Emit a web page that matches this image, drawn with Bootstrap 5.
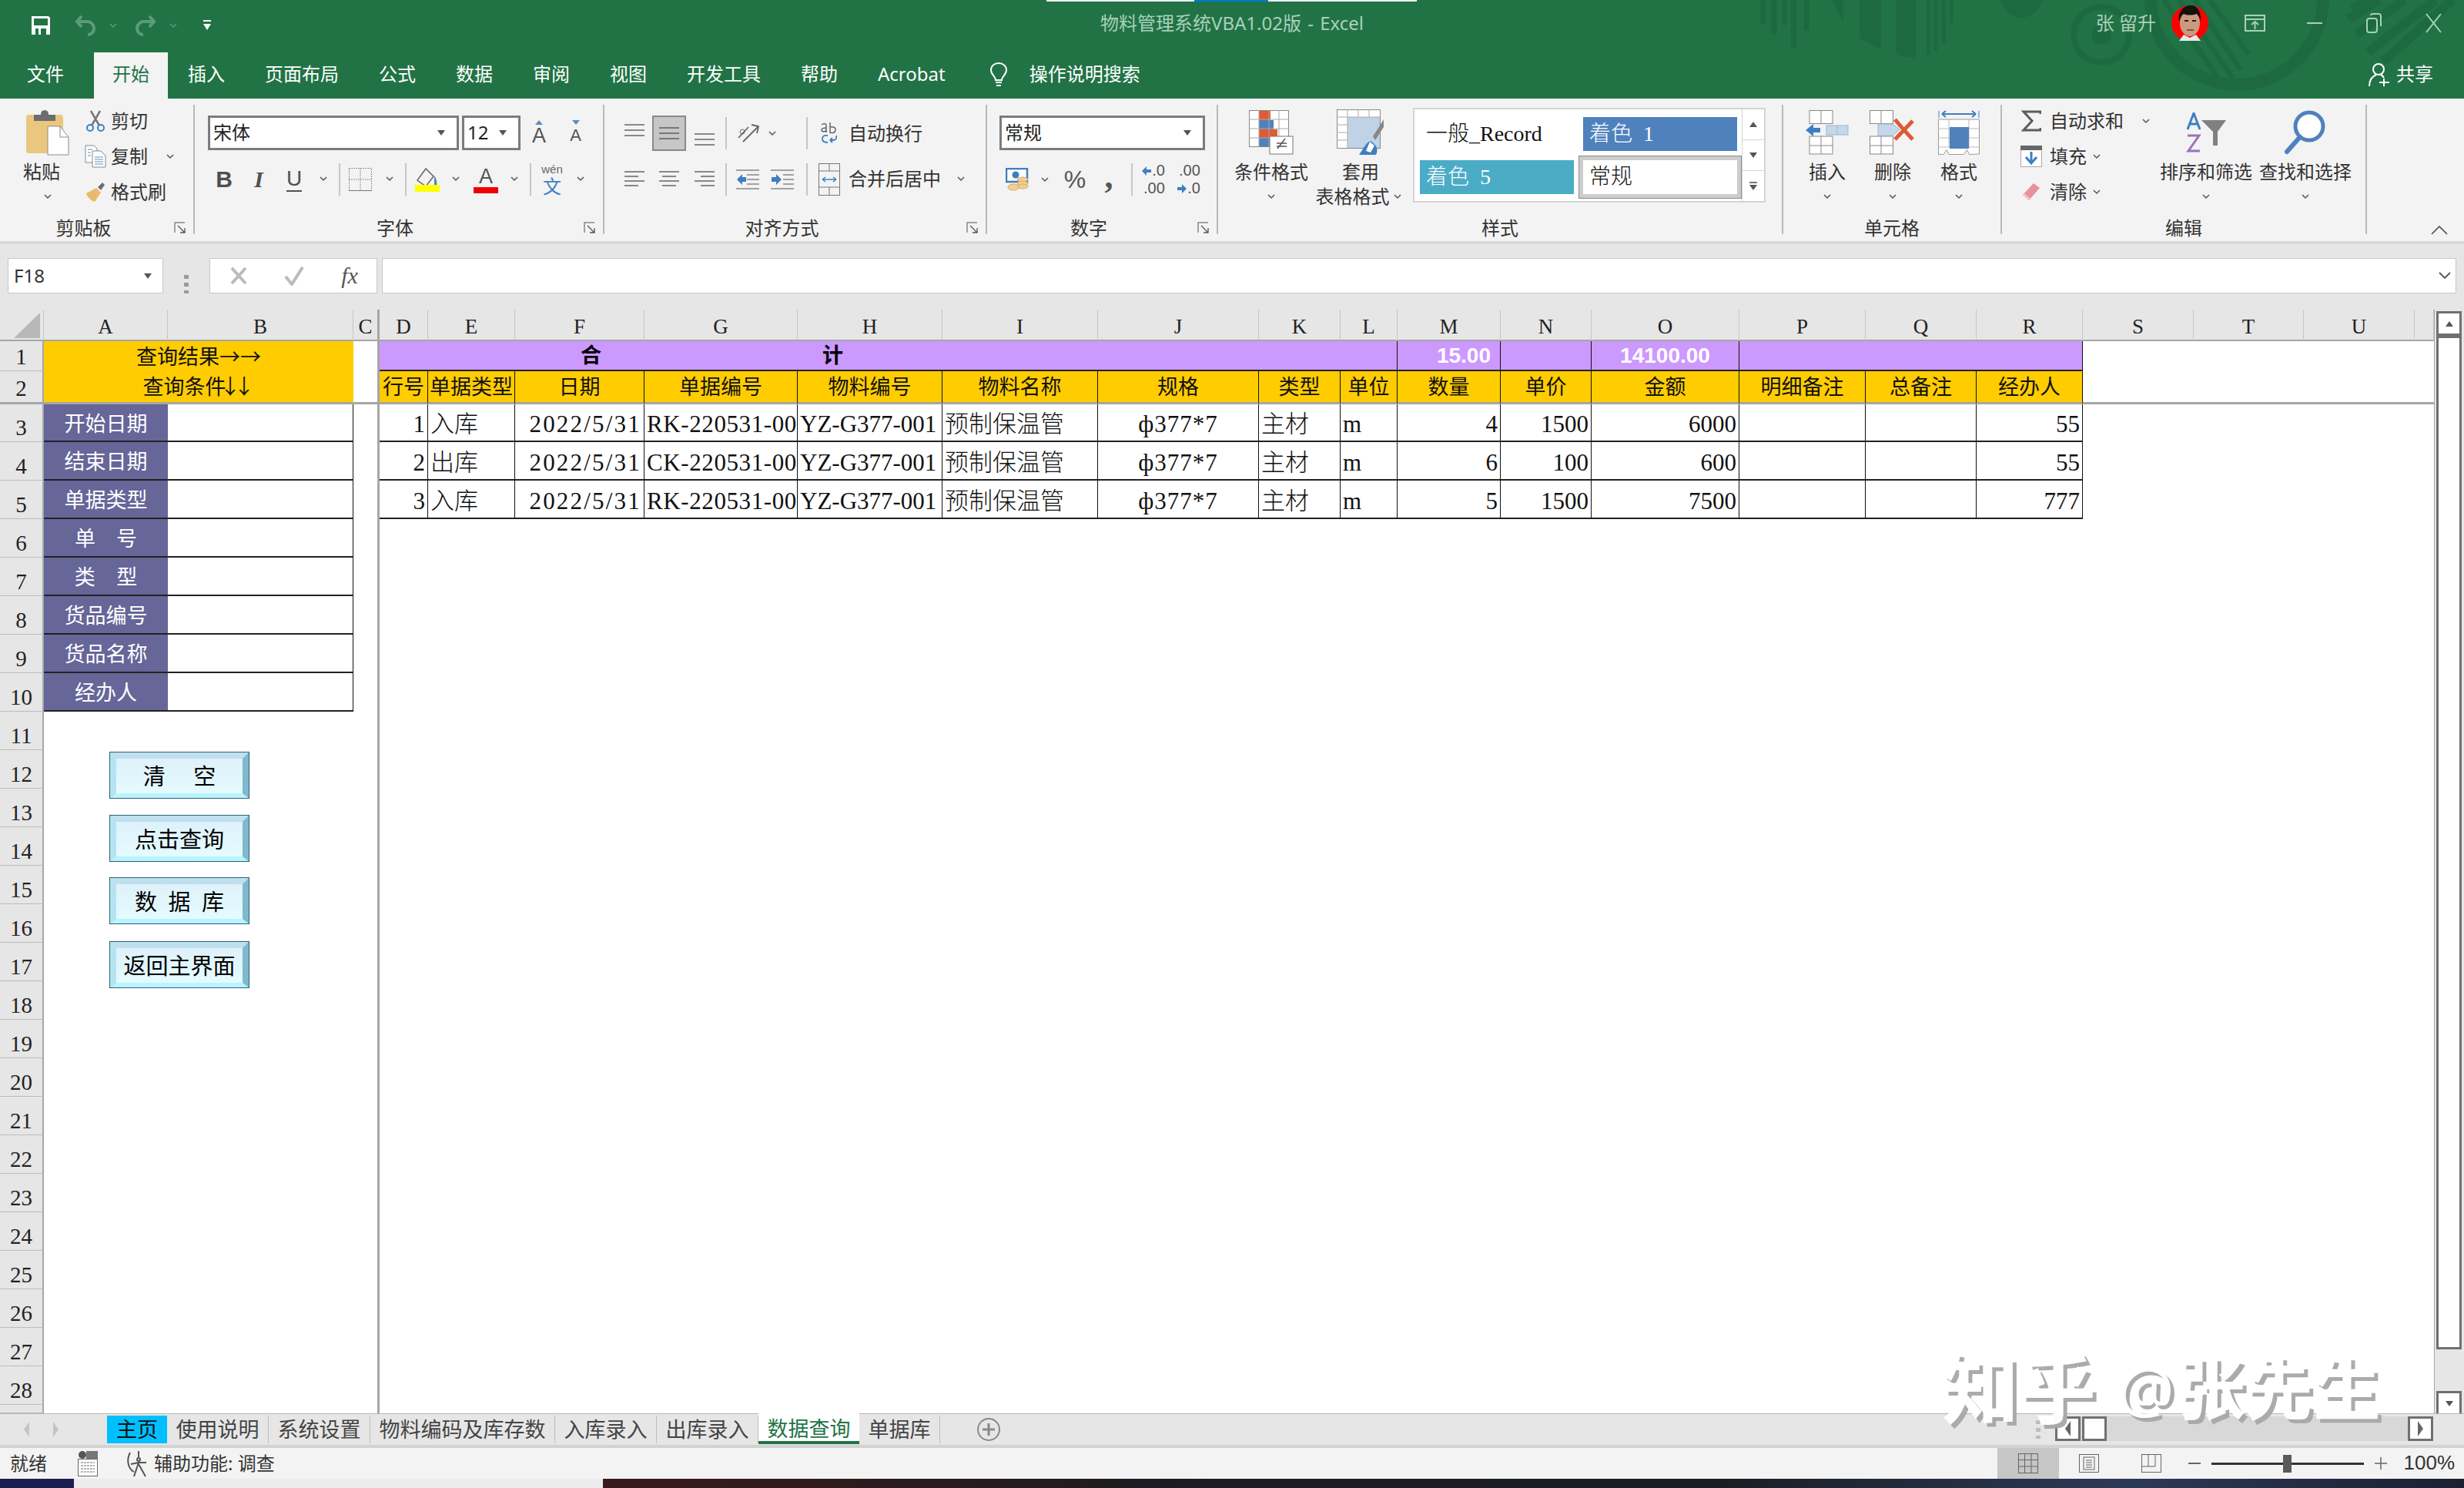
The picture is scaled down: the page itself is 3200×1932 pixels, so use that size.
<!DOCTYPE html>
<html lang="zh-CN">
<head>
<meta charset="utf-8">
<title>物料管理系统VBA1.02版 - Excel</title>
<link rel="stylesheet" href="https://cdn.jsdelivr.net/npm/bootstrap@5.3.0/dist/css/bootstrap.min.css">
<style>
html,body{margin:0;width:3200px;height:1932px;overflow:hidden;background:#f3f3f3}
body{font-family:"Noto Sans","Noto Sans CJK SC",sans-serif;font-size:24px;line-height:1.2;color:#333}
svg{display:block;flex:none}
.xtop{background:#217346;height:128px;overflow:hidden}
.xdeco{left:0;top:0;pointer-events:none}
.xtrow{height:60px;margin-bottom:8px}
.xside{flex:1 1 0}
.xqat{display:grid;grid-template-columns:66px 59px 27px 51px 27px 44px;justify-items:end;align-items:center;padding-top:6px}
.xtitle{color:#a8d0b9;white-space:nowrap;word-spacing:2px}
.xwin{display:grid;grid-template-columns:auto 68px 74px 74px 77px 78px;justify-items:end;align-items:center;padding-right:29px;color:#a8d0b9;position:relative}
.xtabs{height:60px;color:#fff}
.xtb{display:flex;align-items:center;padding:0 26px 3px;white-space:nowrap}
.xtb0{margin-left:9px}
.xtb1{margin-left:13px;padding:0 24px 3px;background:#f3f3f3;color:#217346}
.xtip{margin-left:31px;gap:28px;padding-bottom:3px}
.xshare{margin-left:auto;padding-right:40px;gap:8px}
.xrib{height:185px;background:#f3f3f3;border-bottom:0;padding-top:8px}
.rg{height:168px;border-right:2px solid #b9b9b9;display:flex;flex-direction:column;flex:none}
.rbd{height:152px;display:flex;flex:none}
.rft{height:16px;line-height:16px;display:flex;align-items:center;white-space:nowrap}
.rlb{flex:1 1 0;text-align:center;line-height:16px}
.rlc{width:34px;display:flex;justify-content:center}
.pl24{padding-left:24px}
.w0{width:253px}.w1{width:532px}.w2{width:497px}.w3{width:300px}.w4{width:734px}.w5{width:284px}.w6{width:474px}
.stk{display:flex;flex-direction:column;align-items:center;flex:none}
.bigic{height:71px;display:flex;align-items:center;justify-content:center}
.biglb{height:32px;line-height:32px;white-space:nowrap}
.bigch{height:32px;display:flex;align-items:center}
.cv{width:10px;height:7px}
.cl1{width:92px;margin-left:30px;align-items:flex-start}
.cl1 .biglb,.cl1 .bigic{width:48px}
.cl1 .bigic{justify-content:flex-start;margin-left:4px}
.cl1 .bigch{margin-left:27px}
.cl2{display:flex;flex-direction:column;margin-left:-18px;margin-top:-2px}
.lnrow{height:46px;display:flex;align-items:center;white-space:nowrap}
.lnic{width:40px;display:flex;justify-content:center;flex:none;margin-right:0}
.ribrows{display:flex;flex-direction:column;gap:15px;padding-top:14px;width:100%}
.rw{height:45px;display:grid;align-items:center;justify-items:center}
.fr1{grid-template-columns:326px 4px 76px 48px 47px;padding-left:17px;justify-items:stretch}
.fr2{grid-template-columns:44px 46px 46px 30px 12px 42px 34px 8px 48px 26px 52px 22px 20px 36px 38px;padding-left:16px}
.drop{height:45px;background:#fff;border:3px solid #7c7c7c;display:flex;align-items:center;justify-content:space-between;padding:0 15px 0 4px;color:#222}
.tri{width:0;height:0;border-left:5px solid transparent;border-right:5px solid transparent;border-top:7px solid #555;flex:none}
.triup{border-top:0;border-bottom:7px solid #555}
.sepv{width:2px;height:42px;background:#c6c6c6}
.fsB{font:700 30px "Liberation Sans",sans-serif;color:#505050}
.fsI{font:italic 700 30px "Liberation Serif",serif;color:#505050}
.fsU{font:700 28px "Liberation Sans",sans-serif;color:#505050;border-bottom:2px solid #505050;line-height:30px;font-weight:400}
.sgA{font:400 27px/28px "Liberation Sans",sans-serif;color:#555;display:flex;flex-direction:column;align-items:center}
.sgA2{font-size:22px}
.wen{font:15px/17px "Liberation Sans",sans-serif;color:#666;text-align:center}
.wen b{display:block;font:400 24px/26px "Noto Sans CJK SC",sans-serif;color:#3f7fc0}
.ar1{grid-template-columns:45px 45px 48px 8px 48px 16px 33px 8px 50px auto;padding-left:16px}
.ar2{grid-template-columns:45px 45px 48px 8px 48px 42px 7px 8px 50px 120px 52px;padding-left:16px}
.arsel{width:44px;height:46px;background:#c6c6c6;border:2px solid #8a8a8a;display:flex;align-items:center;justify-content:center}
.jl{justify-self:start;white-space:nowrap}
.nr1{padding:0 15px 0 16px}
.nr1 .drop{width:267px}
.nr2{grid-template-columns:46px 26px 52px 36px 24px 32px 60px;padding-left:16px}
.pct{font:400 32px "Liberation Sans",sans-serif;color:#555}
.cma{font:700 44px/20px "Liberation Serif",serif;color:#555;height:26px}
.dec{font:400 20px/23px "Liberation Sans",sans-serif;color:#555;display:flex;flex-direction:column;align-items:flex-end}
.decr{display:flex;align-items:center;gap:1px}
.sc1{width:117px;padding-left:21px}
.sc2{width:136px}
.sc2lb{display:flex;align-items:center;gap:5px;height:32px;line-height:32px;margin-left:-6px}
.gal{width:458px;height:123px;margin-top:4px;background:#fff;border:2px solid #d4d4d4;display:flex;flex:none;align-self:flex-start}
.galg{flex:1 1 0;display:grid;grid-template-columns:200px 200px;grid-auto-rows:44px;gap:12px;padding:10px 0 0 7px}
.gi{font-family:"Liberation Serif","Noto Sans CJK SC",serif;font-size:28px;font-weight:300;padding-left:8px;display:flex;align-items:center;white-space:pre}
.gi1{background:#4f81bd;color:#fff}
.gi5{background:#4bacc6;color:#fff}
.gin{box-shadow:0 0 0 5px #cdcdcd,0 0 0 6px #8b8b8b;color:#111}
.gi0{color:#111}
.gsc{width:29px;border-left:1px solid #d4d4d4;display:flex;flex-direction:column}
.gsc span{flex:1 1 0;display:flex;flex-direction:column;align-items:center;justify-content:center;gap:2px;border-bottom:1px solid #d4d4d4}
.gsc span:last-child{border-bottom:0}
.gbar{width:10px;height:2px;background:#777}
.ce0{padding-left:17px}
.ce1{width:80px}.ce2{width:90px}.ce3{width:82px}
.ed0{width:186px;margin-left:14px;margin-top:-2px;display:flex;flex-direction:column}
.edic{width:48px;display:flex;justify-content:center;flex:none}
.ed1{width:130px}.ed2{width:128px}
.rcol{margin-left:auto;margin-right:21px;align-self:flex-end;margin-bottom:8px}
.xfb{height:89px;background:#e6e6e6;border-top:4px solid #d8d8d8;padding-top:18px}
.nbox{width:202px;height:46px;margin-left:10px;background:#fff;border:1px solid #c8c8c8;padding:0 14px 0 7px;color:#333;flex:none}
.dots{width:6px;height:24px;margin:0 27px;flex:none;background:repeating-linear-gradient(#9a9a9a 0 5px,transparent 5px 10px)}
.fxb{width:218px;height:46px;background:#fff;border:1px solid #c8c8c8;display:grid;grid-template-columns:74px 70px 74px;justify-items:center;align-items:center;flex:none}
.fxt{font:italic 30px/30px "Liberation Serif",serif;color:#555}
.fin{width:2694px;height:46px;margin-left:6px;background:#fff;border:1px solid #c8c8c8;padding-right:6px;flex:none}
.xsheet{height:1433px;background:#fff;overflow:hidden}
.sh{border-collapse:separate;border-spacing:0;table-layout:fixed;width:3161px;flex:none;align-self:flex-start;font-family:"Liberation Serif","Noto Sans CJK SC",serif;color:#111}
.sh td,.sh th{padding:0;white-space:nowrap;overflow:hidden;font-weight:400}
.rhd{height:41px}.r1{height:39px}.r2{height:43px}.r3{height:49px}.rn{height:50px}.rz{height:11px}
.c0{width:57px}.c1{width:161px}.c2{width:241px}.c3{width:34px}.c4{width:63px}.c5{width:113px}.c6{width:168px}.c7{width:199px}.c8{width:188px}.c9{width:202px}.c10{width:209px}.c11{width:106px}.c12{width:74px}.c13{width:134px}.c14{width:118px}.c15{width:192px}.c16{width:164px}.c17{width:144px}.c18{width:138px}.c19{width:144px}.c20{width:143px}.c21{width:144px}.c22{width:25px}
.sh th.hc{background:#e6e6e6;border-right:1px solid #c6c6c6;border-bottom:2px solid #a6a6a6;text-align:center;font-size:27px;line-height:34px;vertical-align:middle;padding-top:4px;color:#222}
.crn{background:#e6e6e6;border-right:1px solid #c6c6c6;border-bottom:2px solid #a6a6a6;vertical-align:bottom}
.crn svg{margin:0 0 2px 18px}
.sh td.rh{background:#e6e6e6;border-bottom:1px solid #bcbcbc;border-right:2px solid #a6a6a6;text-align:center;font-size:29px;line-height:30px;vertical-align:bottom;padding-bottom:3px;color:#222}
.fzb{border-bottom:3px solid #a6a6a6!important}
.fzr{border-right:3px solid #a6a6a6!important}
.hy{background:#fc0;font-family:"Noto Sans","Noto Sans CJK SC",sans-serif;font-size:27px;text-align:center;color:#111;line-height:34px}
.hyb{border-right:1px solid #111}
.dn{letter-spacing:-9px;margin:0 9px 0 -8px}
.sh td.hp{background:#c9f;border-bottom:2px solid #222;font:700 27px/34px "Liberation Sans","Noto Sans CJK SC",sans-serif;text-align:center;color:#000}
.hpr{border-right:1px solid #111}
.sh td.hpw{color:#fff;font-size:28px}
.sh td.hpe{text-align:right;padding-right:12px}
.sh td.hpi{text-align:left;padding-left:32px}
.sh td.hpc{padding-left:6px}
.sh td.lb{background:#669;color:#fff;font-family:"Noto Sans","Noto Sans CJK SC",sans-serif;font-size:27px;text-align:center;border-bottom:2px solid #222;line-height:40px;vertical-align:top;padding-top:5px}
.sh td.dt{border-right:1px solid #111;border-bottom:2px solid #222;font-size:31px;font-weight:300;line-height:34px;padding:5px 3px 0}
.dtr{text-align:right}
.dtc{text-align:center;letter-spacing:1px}
.dtd{letter-spacing:2.2px}
.dtn{letter-spacing:.6px}
.sbtn{position:absolute;left:142px;width:182px;height:61px;padding:0;border-radius:0;border-style:solid;border-width:9px 9px 7px;border-color:#bfe0ee #7fb9cd #b9f4ff #b5e3f2;outline:1px solid #2c6176;outline-offset:-1px;background:linear-gradient(#dff1fa,#e4fbff);color:#000;font:400 29px/29px "Noto Sans","Noto Sans CJK SC",sans-serif;white-space:pre}
.sb1{top:574px}.sb2{top:656px}.sb3{top:737px}.sb4{top:820px}
.vs{width:39px;background:#e6e6e6;border-left:1px solid #a6a6a6;padding:2px 3px 0 2px;flex:none;display:flex;flex-direction:column;height:1433px}
.sbb{background:#fff;border:3px solid #707070;display:flex;align-items:center;justify-content:center;flex:none}
.vsb{height:32px}
.vthumb{height:1316px;margin-top:0;margin-bottom:54px;flex:none}
.xtabb{height:45px;background:#e6e6e6;border-top:1px solid #b5b5b5;border-bottom:4px solid #d2d2d2}
.xarr{width:139px;gap:31px;padding-left:31px;flex:none}
.trl{width:0;height:0;border-top:10px solid transparent;border-bottom:10px solid transparent;border-right:7px solid #c4c4c4}
.trr{width:0;height:0;border-top:10px solid transparent;border-bottom:10px solid transparent;border-left:7px solid #c4c4c4}
.sbb .trl{border-right-color:#666}
.sbb .trr{border-left-color:#666}
.stb{padding:0 11.5px;height:36px;margin-top:2px;line-height:36px;font-size:27px;color:#444;border-right:1px solid #bdbdbd;white-space:nowrap;flex:none;letter-spacing:0}
.stb0{background:#00bfff;color:#111;width:78px;text-align:center;border-right:0}
.stbon{background:#fff;color:#217346;height:40px;margin-top:-1px;line-height:40px;border-bottom:4px solid #217346;border-right:0}
.plus{margin-left:47px}
.hdots{width:6px;height:24px;margin-right:19px;background:repeating-linear-gradient(#bdbdbd 0 5px,transparent 5px 10px)}
.hs{width:491px;height:32px;background:#d8d8d8;margin-right:40px;margin-top:3px;flex:none}
.hsb{width:33px;height:32px}
.hth{width:32px;height:32px;margin-left:2px}
.xst{height:40px;background:#f3f3f3;color:#333;white-space:nowrap}
.st0{margin-left:13px;width:88px}
.st1{width:63px}
.stc{gap:6px}
.stv{height:40px;width:80px;background:#c6c6c6;margin-left:auto;display:flex;align-items:center;justify-content:center}
.str{margin-right:12px;gap:0}
.stic{width:78px;display:flex;justify-content:center}
.stic2{width:84px;margin-right:6px}
.sld{width:198px;height:3px;background:#333;position:relative;margin:0 14px}
.sld i{position:absolute;left:93px;top:-10px;width:11px;height:23px;background:#5a5a5a}
.stz{margin-left:22px;font-size:26px;font-family:"Liberation Sans",sans-serif}
.xtask{height:12px;background:#1a1a50}
.tk0{width:96px;flex:none;background:#1b1f50}
.tk1{width:687px;flex:none;background:#ececec}
.tk2{flex:1 1 0;background:linear-gradient(90deg,#3a1a1c 0,#1c1c20 30%,#1a1e24 60%,#2b3a58 82%,#1a2030 100%)}
.xwm{left:2522px;top:1747px;font-size:100px;line-height:110px;font-weight:700;color:#fff;white-space:nowrap;text-shadow:5px 5px 0 #a9a9a9;opacity:.97;pointer-events:none;display:flex;align-items:center}
.wm1{font-size:82px;margin-left:28px;margin-right:4px;font-weight:400}
.wm2{font-size:88px}
</style>
</head>
<body>
<svg class="d-none"><defs>
<symbol id="cv" viewBox="0 0 10 7"><path d="M1 1l4 4 4-4" fill="none" stroke="#555" stroke-width="1.5"/></symbol>
<symbol id="dl" viewBox="0 0 16 16"><path d="M1 14V1h13" fill="none" stroke="#888" stroke-width="1.5"/><path d="M5 5l9 9M14 8v6H8" fill="none" stroke="#555" stroke-width="1.3"/></symbol>
</defs></svg>

<header class="xtop position-relative">
<svg class="xdeco position-absolute" width="3200" height="128" viewBox="0 0 3200 128" fill="#1e6a40">
<rect x="1359" y="0" width="481" height="2" fill="#f3f3f3"/><rect x="1551" y="0" width="96" height="2" fill="#0078d7"/>
<rect x="2286" y="0" width="8" height="32"/><rect x="2300" y="0" width="8" height="45"/><rect x="2314" y="0" width="6" height="33"/><rect x="2326" y="0" width="7" height="63"/><rect x="2343" y="0" width="7" height="40"/>
<path d="M2380 0l14 28V0z"/>
<path d="M2415 0v50l28 14V0zM2462 0v70q12 6 26 4V0z"/>
<rect x="2502" y="0" width="5" height="72"/><rect x="2511" y="0" width="5" height="66"/><rect x="2522" y="0" width="5" height="56"/><rect x="2532" y="0" width="5" height="30"/>
<circle cx="2625" cy="-4" r="27"/>
<circle cx="2729" cy="45" r="36" fill="none" stroke="#1e6a40" stroke-width="8"/><circle cx="2729" cy="45" r="13"/>
<circle cx="2905" cy="-2" r="112" fill="none" stroke="#1e6a40" stroke-width="16"/>
<path d="M2810 0l70 100M2830 0l70 102M2850 0l60 90M2870 0l50 70" stroke="#1e6a40" stroke-width="7" fill="none"/>
<path d="M3050 25l40 -25M3060 45l62 -45M3075 68l88 -68M3055 12l18 -12M3095 80l90 -80" stroke="#1e6a40" stroke-width="12" fill="none"/>
</svg>
<div class="d-flex align-items-center xtrow position-relative">
 <div class="xside">
  <div class="xqat">
   <svg width="26" height="26" viewBox="0 0 26 26"><path d="M1 1h22l2 2v22H1z" fill="#fff"/><rect x="4" y="4" width="18" height="9" fill="#217346"/><rect x="6" y="17" width="4" height="8" fill="#217346"/><rect x="13" y="17" width="7" height="8" fill="#217346"/></svg>
   <svg width="28" height="28" viewBox="0 0 28 28"><path d="M9 2L3 9l6 7M3 9h13c5 0 9 4 9 9s-4 8-8 8" fill="none" stroke="#5c9b78" stroke-width="4"/></svg>
   <svg class="cv" viewBox="0 0 10 7"><path d="M1 1l4 4 4-4" fill="none" stroke="#5c9b78" stroke-width="1.5"/></svg>
   <svg width="28" height="28" viewBox="0 0 28 28"><path d="M19 2l6 7-6 7M25 9H12c-5 0-9 4-9 9s4 8 8 8" fill="none" stroke="#5c9b78" stroke-width="4"/></svg>
   <svg class="cv" viewBox="0 0 10 7"><path d="M1 1l4 4 4-4" fill="none" stroke="#5c9b78" stroke-width="1.5"/></svg>
   <svg width="10" height="14" viewBox="0 0 10 14"><rect y="0" width="10" height="2" fill="#fff"/><path d="M0 5h10L5 13z" fill="#fff"/></svg>
  </div>
 </div>
 <div class="xtitle">物料管理系统VBA1.02版 - Excel</div>
 <div class="xside d-flex justify-content-end">
  <div class="xwin">
   <span>张 留升</span>
   <svg width="48" height="48" viewBox="0 0 48 48"><ellipse cx="24" cy="24" rx="24" ry="23" fill="#f00"/><ellipse cx="24" cy="24" rx="13" ry="17" fill="#c99a80"/><path d="M10 22C8 8 17 1 25 1s14 7 13 21c-1-5-3-8-5-10-6 2-13 2-17 0-3 2-5 6-6 10z" fill="#14110e"/><path d="M17 21h5M27 21h5" stroke="#2a1c16" stroke-width="2"/><path d="M20 33h9" stroke="#8b4b44" stroke-width="2"/><path d="M10 47l6-8 8 4 8-4 6 8z" fill="#e8e8e8"/></svg>
   <svg width="27" height="22" viewBox="0 0 27 22" fill="none" stroke="#a8d0b9" stroke-width="2"><rect x="1" y="1" width="25" height="20"/><path d="M1 6h25M13.500 19V9M9 13l4.500-4 4.500 4"/></svg>
   <svg width="20" height="2" viewBox="0 0 20 2"><rect width="20" height="2" fill="#a8d0b9"/></svg>
   <svg width="20" height="26" viewBox="0 0 20 26" fill="none" stroke="#a8d0b9" stroke-width="2"><rect x="1" y="7" width="13" height="18" rx="3"/><path d="M6 3q0-2 3-2h7q3 0 3 3v13"/></svg>
   <svg width="21" height="26" viewBox="0 0 21 26" fill="none" stroke="#a8d0b9" stroke-width="2"><path d="M1 1l19 24M20 1L1 25"/></svg>
  </div>
 </div>
</div>
<nav class="d-flex xtabs position-relative">
 <span class="xtb xtb0">文件</span><span class="xtb xtb1">开始</span><span class="xtb">插入</span><span class="xtb">页面布局</span><span class="xtb">公式</span><span class="xtb">数据</span><span class="xtb">审阅</span><span class="xtb">视图</span><span class="xtb">开发工具</span><span class="xtb">帮助</span><span class="xtb">Acrobat</span>
 <span class="d-flex align-items-center xtip"><svg width="24" height="32" viewBox="0 0 24 32" fill="none" stroke="#fff" stroke-width="2"><path d="M8 23c0-5-6-7-6-13C2 5 6 1 12 1s10 4 10 9c0 6-6 8-6 13z"/><path d="M8 26h8M9 30h6"/></svg><span>操作说明搜索</span></span>
 <span class="xtb xshare"><svg width="28" height="32" viewBox="0 0 28 32" fill="none" stroke="#fff" stroke-width="2"><circle cx="13" cy="9" r="7"/><path d="M1 31c0-8 4-13 9-15M16 16c2 1 3 2 4 4M20 21v10M14 26h13"/></svg><span>共享</span></span>
</nav>
</header>

<section class="xrib d-flex">
 <div class="rg w0">
  <div class="rbd">
   <div class="stk cl1">
    <div class="bigic"><svg width="56" height="60" viewBox="0 0 56 60"><rect x="0" y="7" width="48" height="50" rx="4" fill="#ebc67f"/><path d="M10 15V7h9q0-6 5-6t5 6h9v8z" fill="#6d6d6d"/><path d="M28 22h16l11 14v23H28z" fill="#fff" stroke="#8d8d8d"/><path d="M44 22v14h11" fill="none" stroke="#8d8d8d"/></svg></div>
    <div class="biglb">粘贴</div><div class="bigch"><svg class="cv"><use href="#cv"/></svg></div>
   </div>
   <div class="cl2">
    <div class="lnrow"><span class="lnic"><svg width="26" height="28" viewBox="0 0 26 28" fill="none"><path d="M7 1l11 19M19 1L8 20" stroke="#777" stroke-width="2.500"/><circle cx="6" cy="23" r="4" stroke="#3f7fc0" stroke-width="2"/><circle cx="20" cy="23" r="4" stroke="#3f7fc0" stroke-width="2"/></svg></span><span>剪切</span></div>
    <div class="lnrow"><span class="lnic"><svg width="28" height="30" viewBox="0 0 28 30" fill="#fff" stroke="#888"><path d="M1 1h11l4 4v18H1z"/><path d="M10 8h11l6 6v15H10z"/><path d="M13 16h11M13 19h11M13 22h11M13 25h11M4 6h6M4 10h4M4 14h4" stroke="#6a8fb0"/></svg></span><span>复制</span><svg class="cv ms-4"><use href="#cv"/></svg></div>
    <div class="lnrow"><span class="lnic"><svg width="26" height="28" viewBox="0 0 26 28"><path d="M14 9l6 6-8 12c-4-1-10-6-11-11z" fill="#e8bb6c"/><path d="M16 8l6-6 3 3-5 7z" fill="#6d6d6d"/></svg></span><span>格式刷</span></div>
   </div>
  </div>
  <div class="rft"><span class="rlb">剪贴板</span><span class="rlc"><svg width="16" height="16"><use href="#dl"/></svg></span></div>
 </div>
 <div class="rg w1">
  <div class="rbd"><div class="ribrows">
   <div class="rw fr1">
    <div class="drop"><span>宋体</span><i class="tri"></i></div><span></span>
    <div class="drop"><span>12</span><i class="tri"></i></div>
    <span class="sgA justify-self-center"><svg width="10" height="6" viewBox="0 0 10 6"><path d="M0 6L5 0l5 6z" fill="#5a8fc2"/></svg>A</span>
    <span class="sgA sgA2 justify-self-center"><svg width="10" height="6" viewBox="0 0 10 6"><path d="M0 0l5 6 5-6z" fill="#5a8fc2"/></svg>A</span>
   </div>
   <div class="rw fr2">
    <span class="fsB">B</span><span class="fsI">I</span><span class="fsU">U</span><svg class="cv"><use href="#cv"/></svg><span class="sepv"></span>
    <svg width="30" height="30" viewBox="0 0 30 30" fill="none" stroke="#777" stroke-dasharray="1.500 1.500"><rect x=".5" y=".5" width="29" height="29"/><path d="M15 0v30M0 15h30"/><path d="M0 29.500h30" stroke-dasharray="none"/></svg>
    <svg class="cv"><use href="#cv"/></svg><span class="sepv"></span>
    <svg width="32" height="32" viewBox="0 0 32 32"><path d="M14 2l-11 15 11 8 10-13z" fill="none" stroke="#666" stroke-width="1.500"/><path d="M24 10c3 3 5 8 4 14l-3-1v-10" fill="#4f81bd"/><rect y="23" width="32" height="9" fill="#ff0"/></svg>
    <svg class="cv"><use href="#cv"/></svg>
    <span class="d-flex flex-column align-items-center"><span class="sgA">A</span><svg width="32" height="8" viewBox="0 0 32 8"><rect width="32" height="8" fill="#e00"/></svg></span>
    <svg class="cv"><use href="#cv"/></svg><span class="sepv"></span>
    <span class="wen">wén<b>文</b></span><svg class="cv"><use href="#cv"/></svg>
   </div>
  </div></div>
  <div class="rft"><span class="rlb pl24">字体</span><span class="rlc"><svg width="16" height="16"><use href="#dl"/></svg></span></div>
 </div>
 <div class="rg w2">
  <div class="rbd"><div class="ribrows">
   <div class="rw ar1">
    <svg class="mb-2" width="26" height="18" viewBox="0 0 26 18" stroke="#888" stroke-width="2"><path d="M0 2h26M0 9h26M0 16h26"/></svg>
    <span class="arsel"><svg width="26" height="18" viewBox="0 0 26 18" stroke="#777" stroke-width="2"><path d="M0 2h26M0 9h26M0 16h26"/></svg></span>
    <svg class="mt-3" width="26" height="18" viewBox="0 0 26 18" stroke="#888" stroke-width="2"><path d="M0 2h26M0 9h26M0 16h26"/></svg>
    <span class="sepv"></span>
    <svg width="30" height="28" viewBox="0 0 30 28" fill="none"><path d="M3 20L16 6M9 25l20-20M20 3l9 2-2 9" stroke="#666" stroke-width="1.800"/><circle cx="8" cy="12" r="3" stroke="#666"/></svg>
    <svg class="cv"><use href="#cv"/></svg><span></span><span class="sepv"></span>
    <svg width="22" height="30" viewBox="0 0 22 30" fill="none"><path d="M1 4q4-3 6 0v10M7 8q-6 0-6 3t6 1M12 1v13q6 2 7-3t-7-4" stroke="#666" stroke-width="1.500"/><path d="M9 18q-7-1-7 4t7 5M12 24h4q5 0 4-6M12 24l3-3M12 24l3 3" stroke="#3f7fc0" stroke-width="1.800"/></svg>
    <span class="jl">自动换行</span>
   </div>
   <div class="rw ar2">
    <svg width="26" height="22" viewBox="0 0 26 22" stroke="#888" stroke-width="2"><path d="M0 1h26M0 7h18M0 13h26M0 19h18"/></svg>
    <svg width="26" height="22" viewBox="0 0 26 22" stroke="#888" stroke-width="2"><path d="M0 1h26M4 7h18M0 13h26M4 19h18"/></svg>
    <svg width="26" height="22" viewBox="0 0 26 22" stroke="#888" stroke-width="2"><path d="M0 1h26M8 7h18M0 13h26M8 19h18"/></svg>
    <span class="sepv"></span>
    <svg width="30" height="26" viewBox="0 0 30 26"><path d="M0 1h30M14 7h16M14 13h16M14 19h16M0 25h30" stroke="#888" stroke-width="1.600"/><path d="M1 13l7-7v4h5v6H8v4z" fill="#3f7fc0"/></svg>
    <svg width="30" height="26" viewBox="0 0 30 26"><path d="M0 1h30M16 7h14M16 13h14M16 19h14M0 25h30" stroke="#888" stroke-width="1.600"/><path d="M14 13l-7-7v4H1v6h6v4z" fill="#3f7fc0"/></svg>
    <span></span><span class="sepv"></span>
    <svg width="28" height="42" viewBox="0 0 28 42" fill="none"><rect x=".5" y=".5" width="27" height="41" stroke="#777"/><path d="M0 10h28M0 31h28M14 0v10M14 31v11" stroke="#777"/><path d="M5 21h18M5 21l4-3M5 21l4 3M23 21l-4-3M23 21l-4 3" stroke="#3f7fc0" stroke-width="1.500"/></svg>
    <span class="jl">合并后居中</span><svg class="cv"><use href="#cv"/></svg>
   </div>
  </div></div>
  <div class="rft"><span class="rlb">对齐方式</span><span class="rlc"><svg width="16" height="16"><use href="#dl"/></svg></span></div>
 </div>
 <div class="rg w3">
  <div class="rbd"><div class="ribrows">
   <div class="nr1"><div class="drop"><span>常规</span><i class="tri"></i></div></div>
   <div class="rw nr2">
    <svg width="30" height="30" viewBox="0 0 30 30"><rect x="1" y="1" width="27" height="17" fill="#fff" stroke="#3f7fc0" stroke-width="2.500"/><circle cx="13" cy="9" r="4.500" fill="#3f7fc0"/><ellipse cx="22" cy="15" rx="7" ry="3" fill="#f0cf97" stroke="#d9a95a"/><ellipse cx="22" cy="20" rx="7" ry="3" fill="#f0cf97" stroke="#d9a95a"/><ellipse cx="22" cy="24" rx="7" ry="3" fill="#f0cf97" stroke="#d9a95a"/><ellipse cx="10" cy="25" rx="7" ry="4" fill="#f0cf97" stroke="#d9a95a"/></svg>
    <svg class="cv"><use href="#cv"/></svg>
    <span class="pct">%</span><span class="cma">,</span><span class="sepv"></span>
    <span class="dec"><span class="decr"><svg width="12" height="14" viewBox="0 0 12 14"><path d="M0 7l6-6v4h6v4H6v4z" fill="#3f7fc0"/></svg><span>.0</span></span><span>.00</span></span>
    <span class="dec"><span>.00</span><span class="decr"><svg width="12" height="14" viewBox="0 0 12 14"><path d="M12 7L6 1v4H0v4h6v4z" fill="#3f7fc0"/></svg><span>.0</span></span></span>
   </div>
  </div></div>
  <div class="rft"><span class="rlb">数字</span><span class="rlc"><svg width="16" height="16"><use href="#dl"/></svg></span></div>
 </div>
 <div class="rg w4">
  <div class="rbd">
   <div class="stk sc1">
    <div class="bigic"><svg width="58" height="58" viewBox="0 0 58 58"><g fill="#fff" stroke="#888"><rect x=".5" y=".5" width="51" height="47"/></g><path d="M13 1h15v12H13z" fill="#de5b33"/><path d="M13 13h19v12H13z" fill="#4f81bd"/><path d="M13 25h24v11H13z" fill="#de5b33"/><path d="M13 36h14v11H13z" fill="#4f81bd"/><path d="M0 12h52M0 24h52M0 36h52M13 0v48M26 0v48M39 0v48" stroke="#aaa" fill="none"/><rect x="27" y="34" width="30" height="23" fill="#fff" stroke="#777"/><path d="M37 50l10-13M36 43h13M36 47h13" stroke="#555" stroke-width="1.500"/></svg></div>
    <div class="biglb">条件格式</div><div class="bigch"><svg class="cv"><use href="#cv"/></svg></div>
   </div>
   <div class="stk sc2">
    <div class="bigic"><svg width="62" height="60" viewBox="0 0 62 60"><rect x=".5" y=".5" width="56" height="50" fill="#fff" stroke="#888"/><path d="M14 10h42v40H14z" fill="#c0d2e6"/><path d="M0 10h57M0 20h14M0 30h14M0 40h14M14 0v50M28 0v10M42 0v10" stroke="#aaa" fill="none"/><path d="M47 35l14-22v10L50 40z" fill="#888"/><path d="M44 41c-7 3-8 8-15 18h22c3-6 2-12-7-18z" fill="#3f7fc0"/><path d="M43 42l6 5-5 9-6-2z" fill="#fff"/></svg></div>
    <div class="biglb">套用</div>
    <div class="sc2lb">表格格式<svg class="cv"><use href="#cv"/></svg></div>
   </div>
   <div class="gal">
    <div class="galg">
     <div class="gi gi0">一般_Record</div><div class="gi gi1">着色  1</div>
     <div class="gi gi5">着色  5</div><div class="gi gin">常规</div>
    </div>
    <div class="gsc"><span><i class="tri triup"></i></span><span><i class="tri"></i></span><span><i class="gbar"></i><i class="tri"></i></span></div>
   </div>
  </div>
  <div class="rft"><span class="rlb">样式</span></div>
 </div>
 <div class="rg w5">
  <div class="rbd ce0">
   <div class="stk ce1">
    <div class="bigic"><svg width="56" height="58" viewBox="0 0 56 58" fill="#fff" stroke="#888"><rect x="5" y=".5" width="30" height="17"/><path d="M20 0v17"/><rect x="5" y="34" width="30" height="23"/><path d="M20 34v23M5 46h30"/><rect x="27" y="20" width="28" height="12" fill="#c5d7ea" stroke="#a0b4c8"/><path d="M41 20v12" stroke="#a0b4c8"/><path d="M0 26l10-8v5h9v6h-9v5z" fill="#3f7fc0" stroke="none"/></svg></div>
    <div class="biglb">插入</div><div class="bigch"><svg class="cv"><use href="#cv"/></svg></div>
   </div>
   <div class="stk ce2">
    <div class="bigic"><svg width="60" height="58" viewBox="0 0 60 58" fill="#fff" stroke="#888"><rect x=".5" y=".5" width="30" height="17"/><path d="M15 0v17"/><rect x=".5" y="34" width="30" height="23"/><path d="M15 34v23M0 46h30"/><path d="M11 18h19l9 7-9 8H11z" fill="#c5d7ea" stroke="#a0b4c8"/><path d="M33 38L56 14M33 12q8 10 23 26" stroke="#dc5a35" stroke-width="5" fill="none"/></svg></div>
    <div class="biglb">删除</div><div class="bigch"><svg class="cv"><use href="#cv"/></svg></div>
   </div>
   <div class="stk ce3">
    <div class="bigic"><svg width="54" height="58" viewBox="0 0 54 58" fill="none"><path d="M1 1v9M53 1v9" stroke="#3f7fc0"/><path d="M5 5h44M5 5l5-4M5 5l5 4M49 5l-5-4M49 5l-5 4" stroke="#3f7fc0" stroke-width="2"/><path d="M.5 12h53v45l-13 .5 -3-6-4 6H14l-3-6-4 6H.5z" fill="#fff" stroke="#999"/><path d="M0 24h54M0 36h54M0 48h54M14 12v36M40 12v36" stroke="#bbb"/><rect x="15" y="22" width="25" height="28" fill="#4f81bd"/></svg></div>
    <div class="biglb">格式</div><div class="bigch"><svg class="cv"><use href="#cv"/></svg></div>
   </div>
  </div>
  <div class="rft"><span class="rlb">单元格</span></div>
 </div>
 <div class="rg w6">
  <div class="rbd">
   <div class="ed0">
    <div class="lnrow"><span class="edic"><svg width="26" height="28" viewBox="0 0 26 28" fill="none"><path d="M25 5V2H3l11 12L3 26h22v-3" stroke="#5c5c5c" stroke-width="3"/></svg></span><span>自动求和</span><svg class="cv ms-4"><use href="#cv"/></svg></div>
    <div class="lnrow"><span class="edic"><svg width="28" height="28" viewBox="0 0 28 28"><rect x=".5" y=".5" width="27" height="27" fill="#fff" stroke="#aaa"/><rect width="28" height="6" fill="#666"/><path d="M14 8v15M7 15l7 8 7-8" fill="none" stroke="#3f7fc0" stroke-width="3"/></svg></span><span>填充</span><svg class="cv ms-2"><use href="#cv"/></svg></div>
    <div class="lnrow"><span class="edic"><svg width="24" height="24" viewBox="0 0 24 24"><path d="M1 16L15 1l8 6-14 16z" fill="#e8909e"/><path d="M1 16l8 7 2-2-8-7z" fill="#f5c4cc"/></svg></span><span>清除</span><svg class="cv ms-2"><use href="#cv"/></svg></div>
   </div>
   <div class="stk ed1">
    <div class="bigic"><span class="d-flex align-items-center"><svg width="20" height="52" viewBox="0 0 20 52"><path d="M2 22L10 1l8 21M5 15h10" fill="none" stroke="#3f7fc0" stroke-width="3"/><path d="M2 30h15L3 50h15" fill="none" stroke="#9b72b8" stroke-width="3"/></svg><svg width="32" height="34" viewBox="0 0 32 34"><path d="M0 1h32L21 16v18h-6V16z" fill="#808080"/></svg></span></div>
    <div class="biglb">排序和筛选</div><div class="bigch"><svg class="cv"><use href="#cv"/></svg></div>
   </div>
   <div class="stk ed2">
    <div class="bigic"><svg width="54" height="58" viewBox="0 0 54 58" fill="none"><circle cx="32" cy="21" r="18" fill="#fff" stroke="#4f81bd" stroke-width="5"/><path d="M19 36L3 54" stroke="#4f81bd" stroke-width="6" stroke-linecap="round"/></svg></div>
    <div class="biglb">查找和选择</div><div class="bigch"><svg class="cv"><use href="#cv"/></svg></div>
   </div>
  </div>
  <div class="rft"><span class="rlb">编辑</span></div>
 </div>
 <svg class="rcol" width="22" height="12" viewBox="0 0 22 12"><path d="M1 11L11 1l10 10" fill="none" stroke="#444" stroke-width="1.500"/></svg>
</section>

<section class="xfb d-flex">
 <div class="nbox d-flex align-items-center justify-content-between"><span>F18</span><i class="tri"></i></div>
 <div class="dots align-self-center"></div>
 <div class="fxb">
  <svg width="22" height="24" viewBox="0 0 22 24"><path d="M2 2l18 20M20 2L2 22" stroke="#bbb" stroke-width="4"/></svg>
  <svg width="26" height="26" viewBox="0 0 26 26"><path d="M2 14l8 10L24 2" fill="none" stroke="#bbb" stroke-width="4"/></svg>
  <span class="fxt">fx</span>
 </div>
 <div class="fin d-flex align-items-center justify-content-end"><svg width="16" height="10" viewBox="0 0 16 10"><path d="M1 1l7 7 7-7" fill="none" stroke="#555" stroke-width="1.800"/></svg></div>
</section>

<main class="xsheet d-flex position-relative">
 <table class="sh">
  <colgroup><col class="c0"><col class="c1"><col class="c2"><col class="c3"><col class="c4"><col class="c5"><col class="c6"><col class="c7"><col class="c8"><col class="c9"><col class="c10"><col class="c11"><col class="c12"><col class="c13"><col class="c14"><col class="c15"><col class="c16"><col class="c17"><col class="c18"><col class="c19"><col class="c20"><col class="c21"><col class="c22"></colgroup>
  <thead>
  <tr class="rhd"><th class="crn"><svg width="34" height="33" viewBox="0 0 34 33"><path d="M34 0v33H0z" fill="#b8b8b8"/></svg></th><th class="hc">A</th><th class="hc">B</th><th class="hc fzr">C</th><th class="hc">D</th><th class="hc">E</th><th class="hc">F</th><th class="hc">G</th><th class="hc">H</th><th class="hc">I</th><th class="hc">J</th><th class="hc">K</th><th class="hc">L</th><th class="hc">M</th><th class="hc">N</th><th class="hc">O</th><th class="hc">P</th><th class="hc">Q</th><th class="hc">R</th><th class="hc">S</th><th class="hc">T</th><th class="hc">U</th><th class="hc"></th></tr>
  </thead>
  <tbody>
  <tr class="r1"><td class="rh">1</td><td class="hy" colspan="2">查询结果→→</td><td class="fzr"></td><td class="hp hpc" colspan="4">合</td><td class="hp hpi hpr" colspan="5">计</td><td class="hp hpw hpe hpr">15.00</td><td class="hp hpr"></td><td class="hp hpw hpr">14100.00</td><td class="hp hpr" colspan="3"></td><td colspan="4"></td></tr>
  <tr class="r2"><td class="rh fzb">2</td><td class="hy fzb" colspan="2">查询条件<span class="dn">↓↓</span></td><td class="fzb fzr"></td><td class="hy hyb fzb">行号</td><td class="hy hyb fzb">单据类型</td><td class="hy hyb fzb">日期</td><td class="hy hyb fzb">单据编号</td><td class="hy hyb fzb">物料编号</td><td class="hy hyb fzb">物料名称</td><td class="hy hyb fzb">规格</td><td class="hy hyb fzb">类型</td><td class="hy hyb fzb">单位</td><td class="hy hyb fzb">数量</td><td class="hy hyb fzb">单价</td><td class="hy hyb fzb">金额</td><td class="hy hyb fzb">明细备注</td><td class="hy hyb fzb">总备注</td><td class="hy hyb fzb">经办人</td><td class="fzb" colspan="4"></td></tr>
  <tr class="r3"><td class="rh">3</td><td class="lb">开始日期</td><td class="dt"></td><td class="fzr"></td><td class="dt dtr">1</td><td class="dt">入库</td><td class="dt dtr dtd">2022/5/31</td><td class="dt dtn">RK-220531-00</td><td class="dt">YZ-G377-001</td><td class="dt">预制保温管</td><td class="dt dtc">ф377*7</td><td class="dt">主材</td><td class="dt">m</td><td class="dt dtr">4</td><td class="dt dtr">1500</td><td class="dt dtr">6000</td><td class="dt"></td><td class="dt"></td><td class="dt dtr">55</td><td colspan="4"></td></tr>
  <tr class="rn"><td class="rh">4</td><td class="lb">结束日期</td><td class="dt"></td><td class="fzr"></td><td class="dt dtr">2</td><td class="dt">出库</td><td class="dt dtr dtd">2022/5/31</td><td class="dt dtn">CK-220531-00</td><td class="dt">YZ-G377-001</td><td class="dt">预制保温管</td><td class="dt dtc">ф377*7</td><td class="dt">主材</td><td class="dt">m</td><td class="dt dtr">6</td><td class="dt dtr">100</td><td class="dt dtr">600</td><td class="dt"></td><td class="dt"></td><td class="dt dtr">55</td><td colspan="4"></td></tr>
  <tr class="rn"><td class="rh">5</td><td class="lb">单据类型</td><td class="dt"></td><td class="fzr"></td><td class="dt dtr">3</td><td class="dt">入库</td><td class="dt dtr dtd">2022/5/31</td><td class="dt dtn">RK-220531-00</td><td class="dt">YZ-G377-001</td><td class="dt">预制保温管</td><td class="dt dtc">ф377*7</td><td class="dt">主材</td><td class="dt">m</td><td class="dt dtr">5</td><td class="dt dtr">1500</td><td class="dt dtr">7500</td><td class="dt"></td><td class="dt"></td><td class="dt dtr">777</td><td colspan="4"></td></tr>
  <tr class="rn"><td class="rh">6</td><td class="lb">单　号</td><td class="dt"></td><td class="fzr"></td><td colspan="19"></td></tr>
  <tr class="rn"><td class="rh">7</td><td class="lb">类 &ensp; 型</td><td class="dt"></td><td class="fzr"></td><td colspan="19"></td></tr>
  <tr class="rn"><td class="rh">8</td><td class="lb">货品编号</td><td class="dt"></td><td class="fzr"></td><td colspan="19"></td></tr>
  <tr class="rn"><td class="rh">9</td><td class="lb">货品名称</td><td class="dt"></td><td class="fzr"></td><td colspan="19"></td></tr>
  <tr class="rn"><td class="rh">10</td><td class="lb">经办人</td><td class="dt"></td><td class="fzr"></td><td colspan="19"></td></tr>
  <tr class="rn"><td class="rh">11</td><td class="fzr" colspan="3"></td><td colspan="19"></td></tr>
  <tr class="rn"><td class="rh">12</td><td class="fzr" colspan="3"></td><td colspan="19"></td></tr>
  <tr class="rn"><td class="rh">13</td><td class="fzr" colspan="3"></td><td colspan="19"></td></tr>
  <tr class="rn"><td class="rh">14</td><td class="fzr" colspan="3"></td><td colspan="19"></td></tr>
  <tr class="rn"><td class="rh">15</td><td class="fzr" colspan="3"></td><td colspan="19"></td></tr>
  <tr class="rn"><td class="rh">16</td><td class="fzr" colspan="3"></td><td colspan="19"></td></tr>
  <tr class="rn"><td class="rh">17</td><td class="fzr" colspan="3"></td><td colspan="19"></td></tr>
  <tr class="rn"><td class="rh">18</td><td class="fzr" colspan="3"></td><td colspan="19"></td></tr>
  <tr class="rn"><td class="rh">19</td><td class="fzr" colspan="3"></td><td colspan="19"></td></tr>
  <tr class="rn"><td class="rh">20</td><td class="fzr" colspan="3"></td><td colspan="19"></td></tr>
  <tr class="rn"><td class="rh">21</td><td class="fzr" colspan="3"></td><td colspan="19"></td></tr>
  <tr class="rn"><td class="rh">22</td><td class="fzr" colspan="3"></td><td colspan="19"></td></tr>
  <tr class="rn"><td class="rh">23</td><td class="fzr" colspan="3"></td><td colspan="19"></td></tr>
  <tr class="rn"><td class="rh">24</td><td class="fzr" colspan="3"></td><td colspan="19"></td></tr>
  <tr class="rn"><td class="rh">25</td><td class="fzr" colspan="3"></td><td colspan="19"></td></tr>
  <tr class="rn"><td class="rh">26</td><td class="fzr" colspan="3"></td><td colspan="19"></td></tr>
  <tr class="rn"><td class="rh">27</td><td class="fzr" colspan="3"></td><td colspan="19"></td></tr>
  <tr class="rn"><td class="rh">28</td><td class="fzr" colspan="3"></td><td colspan="19"></td></tr>
  <tr class="rz"><td class="rh rhz"></td><td class="fzr" colspan="3"></td><td colspan="19"></td></tr>
  </tbody>
 </table>
 <button type="button" class="btn sbtn sb1">清&nbsp;　空</button>
 <button type="button" class="btn sbtn sb2">点击查询</button>
 <button type="button" class="btn sbtn sb3">数&ensp;据&ensp;库</button>
 <button type="button" class="btn sbtn sb4">返回主界面</button>
 <aside class="vs">
  <div class="sbb vsb"><i class="tri triup"></i></div>
  <div class="sbb vthumb"></div>
  <div class="sbb vsb"><i class="tri"></i></div>
 </aside>
</main>

<section class="xtabb d-flex">
 <div class="xarr d-flex align-items-center"><i class="trl"></i><i class="trr"></i></div>
 <span class="stb stb0">主页</span><span class="stb">使用说明</span><span class="stb">系统设置</span><span class="stb">物料编码及库存数</span><span class="stb">入库录入</span><span class="stb">出库录入</span><span class="stb stbon">数据查询</span><span class="stb">单据库</span>
 <svg class="plus align-self-center" width="32" height="32" viewBox="0 0 32 32" fill="none"><circle cx="16" cy="16" r="14" stroke="#888" stroke-width="2"/><path d="M16 8v16M8 16h16" stroke="#888" stroke-width="3"/></svg>
 <div class="ms-auto hdots align-self-center"></div>
 <div class="hs d-flex">
  <div class="sbb hsb"><i class="trl"></i></div>
  <div class="sbb hth"></div>
  <div class="sbb hsb ms-auto"><i class="trr"></i></div>
 </div>
</section>

<footer class="xst d-flex align-items-center">
 <span class="st0">就绪</span>
 <span class="st1"><svg width="26" height="34" viewBox="0 0 26 34"><circle cx="6" cy="6" r="5" fill="#555"/><rect x="11" y="1" width="15" height="10" fill="#777"/><rect x=".5" y="11.500" width="25" height="22" fill="#fff" stroke="#666"/><path d="M4 16h18M4 20h18M4 24h18M4 28h18" stroke="#666" stroke-dasharray="3 1"/></svg></span>
 <span class="d-flex align-items-center stc"><svg width="30" height="38" viewBox="0 0 30 38" fill="none" stroke="#555" stroke-width="2"><path d="M5 5C0 14 2 26 10 30M16 3v8"/><circle cx="16" cy="14" r="2"/><path d="M6 20l10-2 10 0M16 18l-6 18M16 20l9 16"/></svg><span>辅助功能: 调查</span></span>
 <span class="stv"><svg width="26" height="26" viewBox="0 0 26 26" fill="none" stroke="#666"><rect x=".5" y=".5" width="25" height="25"/><path d="M8.500 0v26M17 0v26M0 8.500h26M0 17h26"/></svg></span>
 <span class="stic"><svg width="26" height="24" viewBox="0 0 26 24" fill="none" stroke="#666"><rect x=".5" y=".5" width="25" height="23"/><rect x="6" y="4" width="14" height="16"/><path d="M9 8h8M9 11h8M9 14h8M9 17h8"/></svg></span>
 <span class="stic stic2"><svg width="26" height="24" viewBox="0 0 26 24" fill="none" stroke="#666"><rect x=".5" y=".5" width="25" height="23"/><path d="M0 16h18V0M9 0v16"/></svg></span>
 <span class="d-flex align-items-center str"><svg width="16" height="2" viewBox="0 0 16 2"><rect width="16" height="2" fill="#666"/></svg><span class="sld"><i></i></span><svg width="16" height="16" viewBox="0 0 16 16"><path d="M8 0v16M0 8h16" stroke="#666" stroke-width="1.500"/></svg><span class="stz">100%</span></span>
</footer>

<div class="xtask d-flex"><span class="tk0"></span><span class="tk1"></span><span class="tk2"></span></div>

<div class="xwm position-absolute"><span>知乎</span><span class="wm1">@</span><span class="wm2">张先生</span></div>

<script src="https://cdn.jsdelivr.net/npm/bootstrap@5.3.0/dist/js/bootstrap.bundle.min.js"></script>
</body>
</html>
